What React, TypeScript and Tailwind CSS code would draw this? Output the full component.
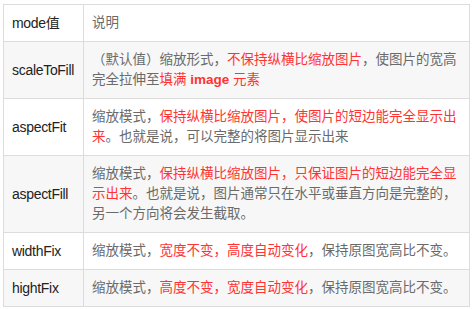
const R = ({ children }: { children: React.ReactNode }) => (
  <span className="text-[#f33]">{children}</span>
)

const rows = [
  {
    mode: "scaleToFill",
    desc: (
      <>
        （默认值）缩放形式，<R>不保持纵横比缩放图片</R>，使图片的宽高
        <br />
        完全拉伸至<R>填满 <b className="font-bold">image</b> 元素</R>
      </>
    ),
  },
  {
    mode: "aspectFit",
    desc: (
      <>
        缩放模式，<R>保持纵横比缩放图片，使图片的短边能完全显示出</R>
        <br />
        <R>来</R>。也就是说，可以完整的将图片显示出来
      </>
    ),
  },
  {
    mode: "aspectFill",
    desc: (
      <>
        缩放模式，<R>保持纵横比缩放图片，只保证图片的短边能完全显</R>
        <br />
        <R>示出来</R>。也就是说，图片通常只在水平或垂直方向是完整的，
        <br />
        另一个方向将会发生截取。
      </>
    ),
  },
  {
    mode: "widthFix",
    desc: (
      <>
        缩放模式，<R>宽度不变，高度自动变化</R>，保持原图宽高比不变。
      </>
    ),
  },
  {
    mode: "hightFix",
    desc: (
      <>
        缩放模式，<R>高度不变，宽度自动变化</R>，保持原图宽高比不变。
      </>
    ),
  },
]

export default function App() {
  return (
    <div className="w-[474px] h-[309px] bg-white pl-[3px] pt-[4px] overflow-hidden">
      <table
        className="w-[467px] border-collapse text-[13.5px] leading-[20px]"
        style={{ fontFamily: '"Liberation Sans", "Noto Sans CJK SC", sans-serif' }}
      >
        <tbody>
          <tr className="bg-white">
            <td className="w-[80px] border border-[#dcdcdc] px-2 py-2 text-[14px] text-[#222] tracking-[-0.3px]">
              mode值
            </td>
            <td className="border border-[#dcdcdc] px-2 py-2 text-[#6a6a6a]">说明</td>
          </tr>
          {rows.map((r, i) => (
            <tr key={r.mode} className={i % 2 === 0 ? "bg-[#f7f7f7]" : "bg-white"}>
              <td className="border border-[#dcdcdc] px-2 py-2 text-[14px] text-[#222] tracking-[-0.3px] whitespace-nowrap">
                {r.mode}
              </td>
              <td className="border border-[#dcdcdc] px-2 py-2 text-[#6a6a6a] whitespace-nowrap">
                {r.desc}
              </td>
            </tr>
          ))}
        </tbody>
      </table>
    </div>
  )
}
